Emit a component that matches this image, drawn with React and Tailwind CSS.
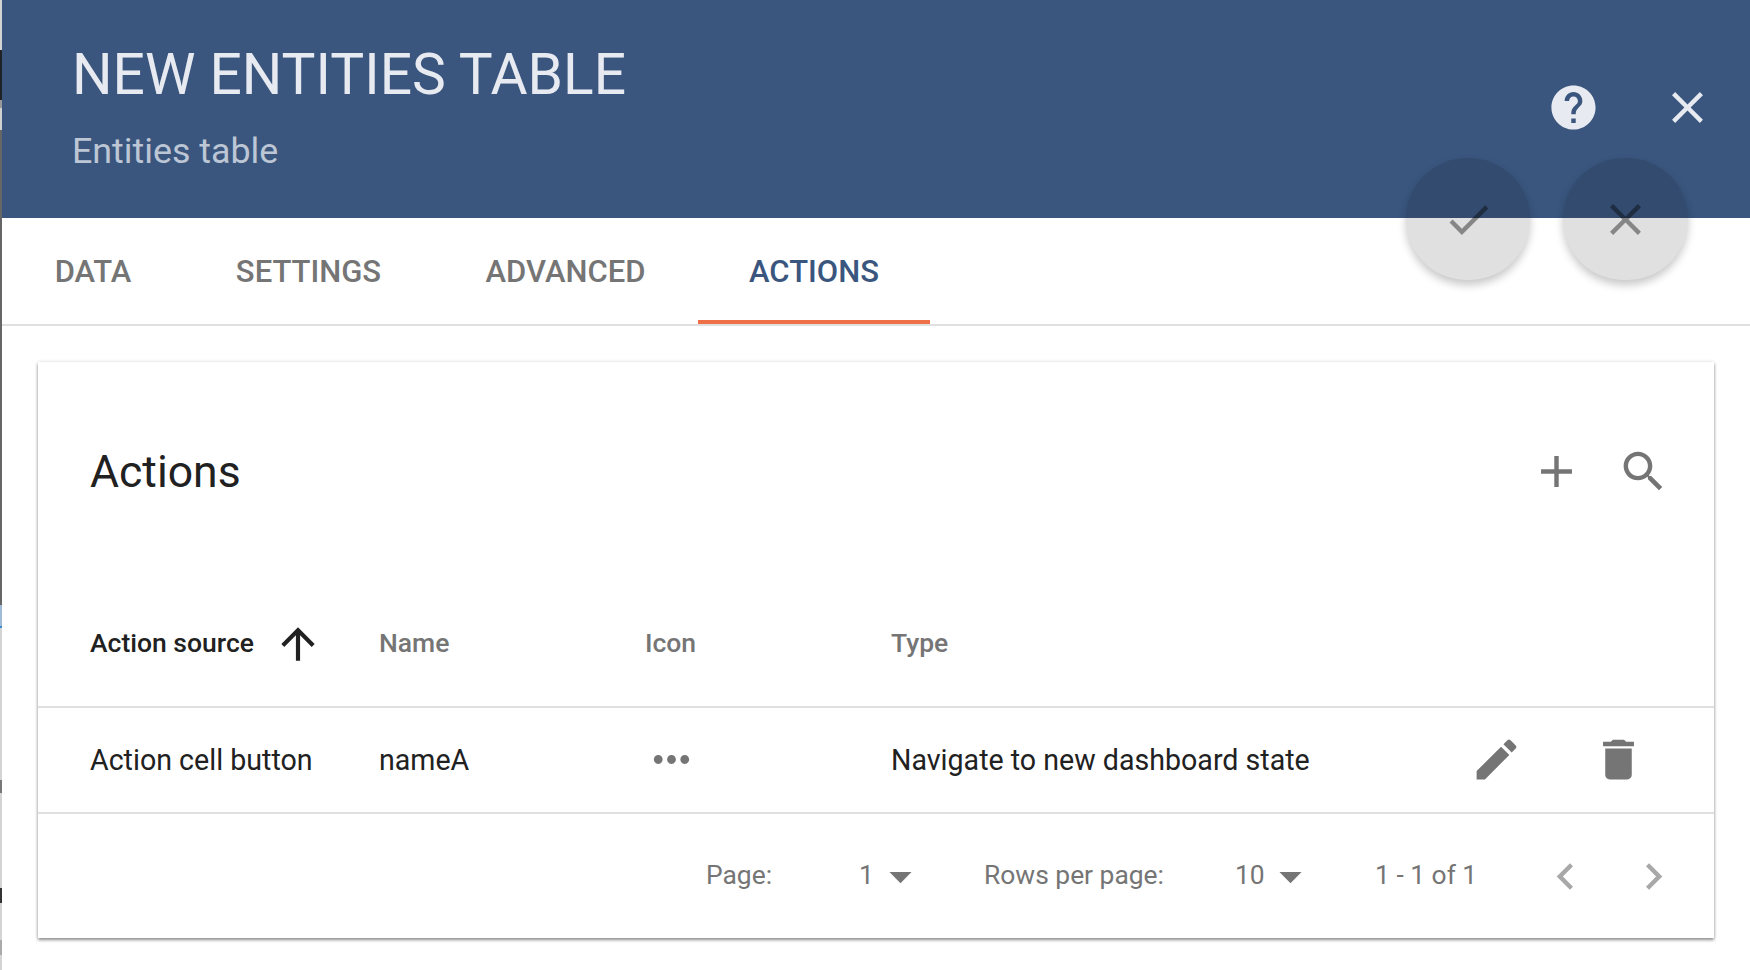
import React from "react";

const Mi = ({ d, size = 24, className = "", fill = "currentColor" }) => (
  <svg viewBox="0 0 24 24" width={size} height={size} className={`shrink-0 ${className}`} fill={fill}>
    <path d={d} />
  </svg>
);

const CLOSE = "M19 6.41 17.59 5 12 10.59 6.41 5 5 6.41 10.59 12 5 17.59 6.41 19 12 13.41 17.59 19 19 17.59 13.41 12z";
const CHECK = "M9 16.17 4.83 12l-1.42 1.41L9 19 21 7l-1.41-1.41z";
const HELP = "M12 2C6.48 2 2 6.48 2 12s4.48 10 10 10 10-4.48 10-10S17.52 2 12 2zm1 17h-2v-2h2v2zm2.07-7.75-.9.92C13.45 12.9 13 13.5 13 15h-2v-.5c0-1.1.45-2.1 1.17-2.83l1.24-1.26c.37-.36.59-.86.59-1.41 0-1.1-.9-2-2-2s-2 .9-2 2H8c0-2.21 1.79-4 4-4s4 1.79 4 4c0 .88-.36 1.68-.93 2.25z";
const PLUS = "M19 13h-6v6h-2v-6H5v-2h6V5h2v6h6v2z";
const SEARCH = "M15.5 14h-.79l-.28-.27C15.41 12.59 16 11.11 16 9.5 16 5.91 13.09 3 9.5 3S3 5.91 3 9.5 5.91 16 9.5 16c1.61 0 3.09-.59 4.23-1.57l.27.28v.79l5 4.99L20.49 19l-4.99-5zm-6 0C7.01 14 5 11.99 5 9.5S7.01 5 9.5 5 14 7.01 14 9.5 11.99 14 9.5 14z";
const EDIT = "M3 17.25V21h3.75L17.81 9.94l-3.75-3.75L3 17.25zM20.71 7.04c.39-.39.39-1.02 0-1.41l-2.34-2.34c-.39-.39-1.02-.39-1.41 0l-1.83 1.83 3.75 3.75 1.83-1.83z";
const TRASH = "M6 19c0 1.1.9 2 2 2h8c1.1 0 2-.9 2-2V7H6v12zM19 4h-3.5l-1-1h-5l-1 1H5v2h14V4z";
const ARROW_UP = "M4 12l1.41 1.41L11 7.83V20h2V7.83l5.58 5.59L20 12l-8-8-8 8z";
const DOTS = "M6 10c-1.1 0-2 .9-2 2s.9 2 2 2 2-.9 2-2-.9-2-2-2zm12 0c-1.1 0-2 .9-2 2s.9 2 2 2 2-.9 2-2-.9-2-2-2zm-6 0c-1.1 0-2 .9-2 2s.9 2 2 2 2-.9 2-2-.9-2-2-2z";
const LEFT = "M15.41 7.41 14 6l-6 6 6 6 1.41-1.41L10.83 12z";
const RIGHT = "M10 6 8.59 7.41 13.17 12l-4.58 4.59L10 18l6-6z";
const DROP = "M7 10l5 5 5-5z";

const Tab = ({ label, active, width }) => (
  <div
    className={`flex h-full items-center justify-center border-b-4 pt-[6px] ${width} ${
      active ? "border-[#ed7048] text-[#3a567e]" : "border-transparent text-[#757575]"
    }`}
  >
    <span className="text-[31px] font-medium">{label}</span>
  </div>
);

/* The sliver of the page behind the dialog, visible at the left edge. */
const EdgeStrip = () => (
  <div className="flex h-full w-[2px] shrink-0 flex-col">
    <div className="h-[50px] bg-[#d4d4d4]" />
    <div className="h-[50px] bg-[#1f2226]" />
    <div className="h-[8px] bg-[#999999]" />
    <div className="h-[22px] bg-[#d0d0d0]" />
    <div className="h-[475px] bg-[#666666]" />
    <div className="h-[21px] bg-[#9fbad6]" />
    <div className="h-[2px] bg-[#3b8ad0]" />
    <div className="h-[152px] bg-[#d4d4d4]" />
    <div className="h-[13px] bg-[#777777]" />
    <div className="h-[95px] bg-[#d4d4d4]" />
    <div className="h-[15px] bg-[#333333]" />
    <div className="h-[37px] bg-[#d4d4d4]" />
    <div className="h-[15px] bg-[#aaaaaa]" />
    <div className="flex-1 bg-[#d4d4d4]" />
  </div>
);

export default function App() {
  return (
    <div className="relative flex h-[970px] w-[1750px] overflow-hidden bg-white font-['Roboto',sans-serif]">
      <EdgeStrip />
      <div className="min-w-0 flex-1">
        <header className="flex h-[218px] justify-between bg-[#3a567e] pl-[70px] pr-[36px]">
          <div className="pt-[38px]">
            <h1 className="text-[56.9px] font-normal leading-[74px] text-[#e7eaf0]">NEW ENTITIES TABLE</h1>
            <p className="mt-[17px] text-[35.8px] leading-[44px] text-[#bcc6d5]">Entities table</p>
          </div>
          <div className="flex items-start gap-[61px] pt-[81px] text-[#e7eaf0]">
            <Mi d={HELP} size={53} />
            <Mi d={CLOSE} size={53} />
          </div>
        </header>

        <nav className="flex h-[108px] border-b-2 border-[#e0e0e0]">
          <Tab label="DATA" width="w-[182px]" />
          <Tab label="SETTINGS" width="w-[249px]" />
          <Tab label="ADVANCED" width="w-[265px]" />
          <Tab label="ACTIONS" width="w-[232px]" active />
        </nav>

        <section className="ml-[36px] mt-[36px] flex h-[576px] w-[1676px] flex-col bg-white shadow-[0_2px_3px_rgba(0,0,0,0.42),0_0_4px_rgba(0,0,0,0.12)]">
          <div className="flex h-[220px] items-start justify-between pl-[52px] pr-[44px] pt-[80px]">
            <h2 className="text-[44.5px] font-normal leading-[60px] text-[#212121]">Actions</h2>
            <div className="flex gap-[34px] pt-[3px] text-[#757575]">
              <Mi d={PLUS} size={53} />
              <Mi d={SEARCH} size={53} />
            </div>
          </div>

          <div className="flex h-[126px] items-center border-b-2 border-[#e0e0e0] pb-[2px] text-[26.5px] font-medium text-[#757575]">
            <div className="flex w-[341px] items-center pl-[52px] text-[#212121]">
              <span>Action source</span>
              <Mi d={ARROW_UP} size={50} className="ml-[19px] mt-[2px]" />
            </div>
            <div className="w-[266px]">Name</div>
            <div className="w-[246px]">Icon</div>
            <div>Type</div>
          </div>

          <div className="flex h-[106px] items-center border-b-2 border-[#e0e0e0] pt-[1px] text-[28.6px] text-[#212121]">
            <div className="w-[341px] pl-[52px]">Action cell button</div>
            <div className="w-[266px]">nameA</div>
            <div className="mt-[-2px] w-[246px] text-[#757575]">
              <Mi d={DOTS} size={53} />
            </div>
            <div className="flex-1">Navigate to new dashboard state</div>
            <div className="mt-[-2px] flex gap-[69px] pr-[69px] text-[#757575]">
              <Mi d={EDIT} size={53} />
              <Mi d={TRASH} size={53} />
            </div>
          </div>

          <div className="flex flex-1 items-center whitespace-nowrap text-[26.4px] text-[#757575]">
            <span className="ml-[668px] w-[153px]">Page:</span>
            <span className="w-[29px]">1</span>
            <Mi d={DROP} size={53} className="ml-[-14px]" />
            <span className="ml-[57px] w-[251px]">Rows per page:</span>
            <span className="w-[29px]">10</span>
            <Mi d={DROP} size={53} />
            <span className="ml-[58px] w-[100px]">1 - 1 of 1</span>
            <Mi d={LEFT} size={53} className="ml-[64px] text-[#a8a8a8]" />
            <Mi d={RIGHT} size={53} className="ml-[35px] text-[#a8a8a8]" />
          </div>
        </section>
      </div>

      <button className="absolute left-[1406px] top-[158px] flex h-[122px] w-[124px] items-center justify-center rounded-full bg-black/12 text-black/40 shadow-[0_5px_8px_rgba(0,0,0,0.22)]">
        <Mi d={CHECK} size={53} />
      </button>
      <button className="absolute left-[1563px] top-[158px] flex h-[122px] w-[125px] items-center justify-center rounded-full bg-black/12 text-black/40 shadow-[0_5px_8px_rgba(0,0,0,0.22)]">
        <Mi d={CLOSE} size={53} />
      </button>
    </div>
  );
}
